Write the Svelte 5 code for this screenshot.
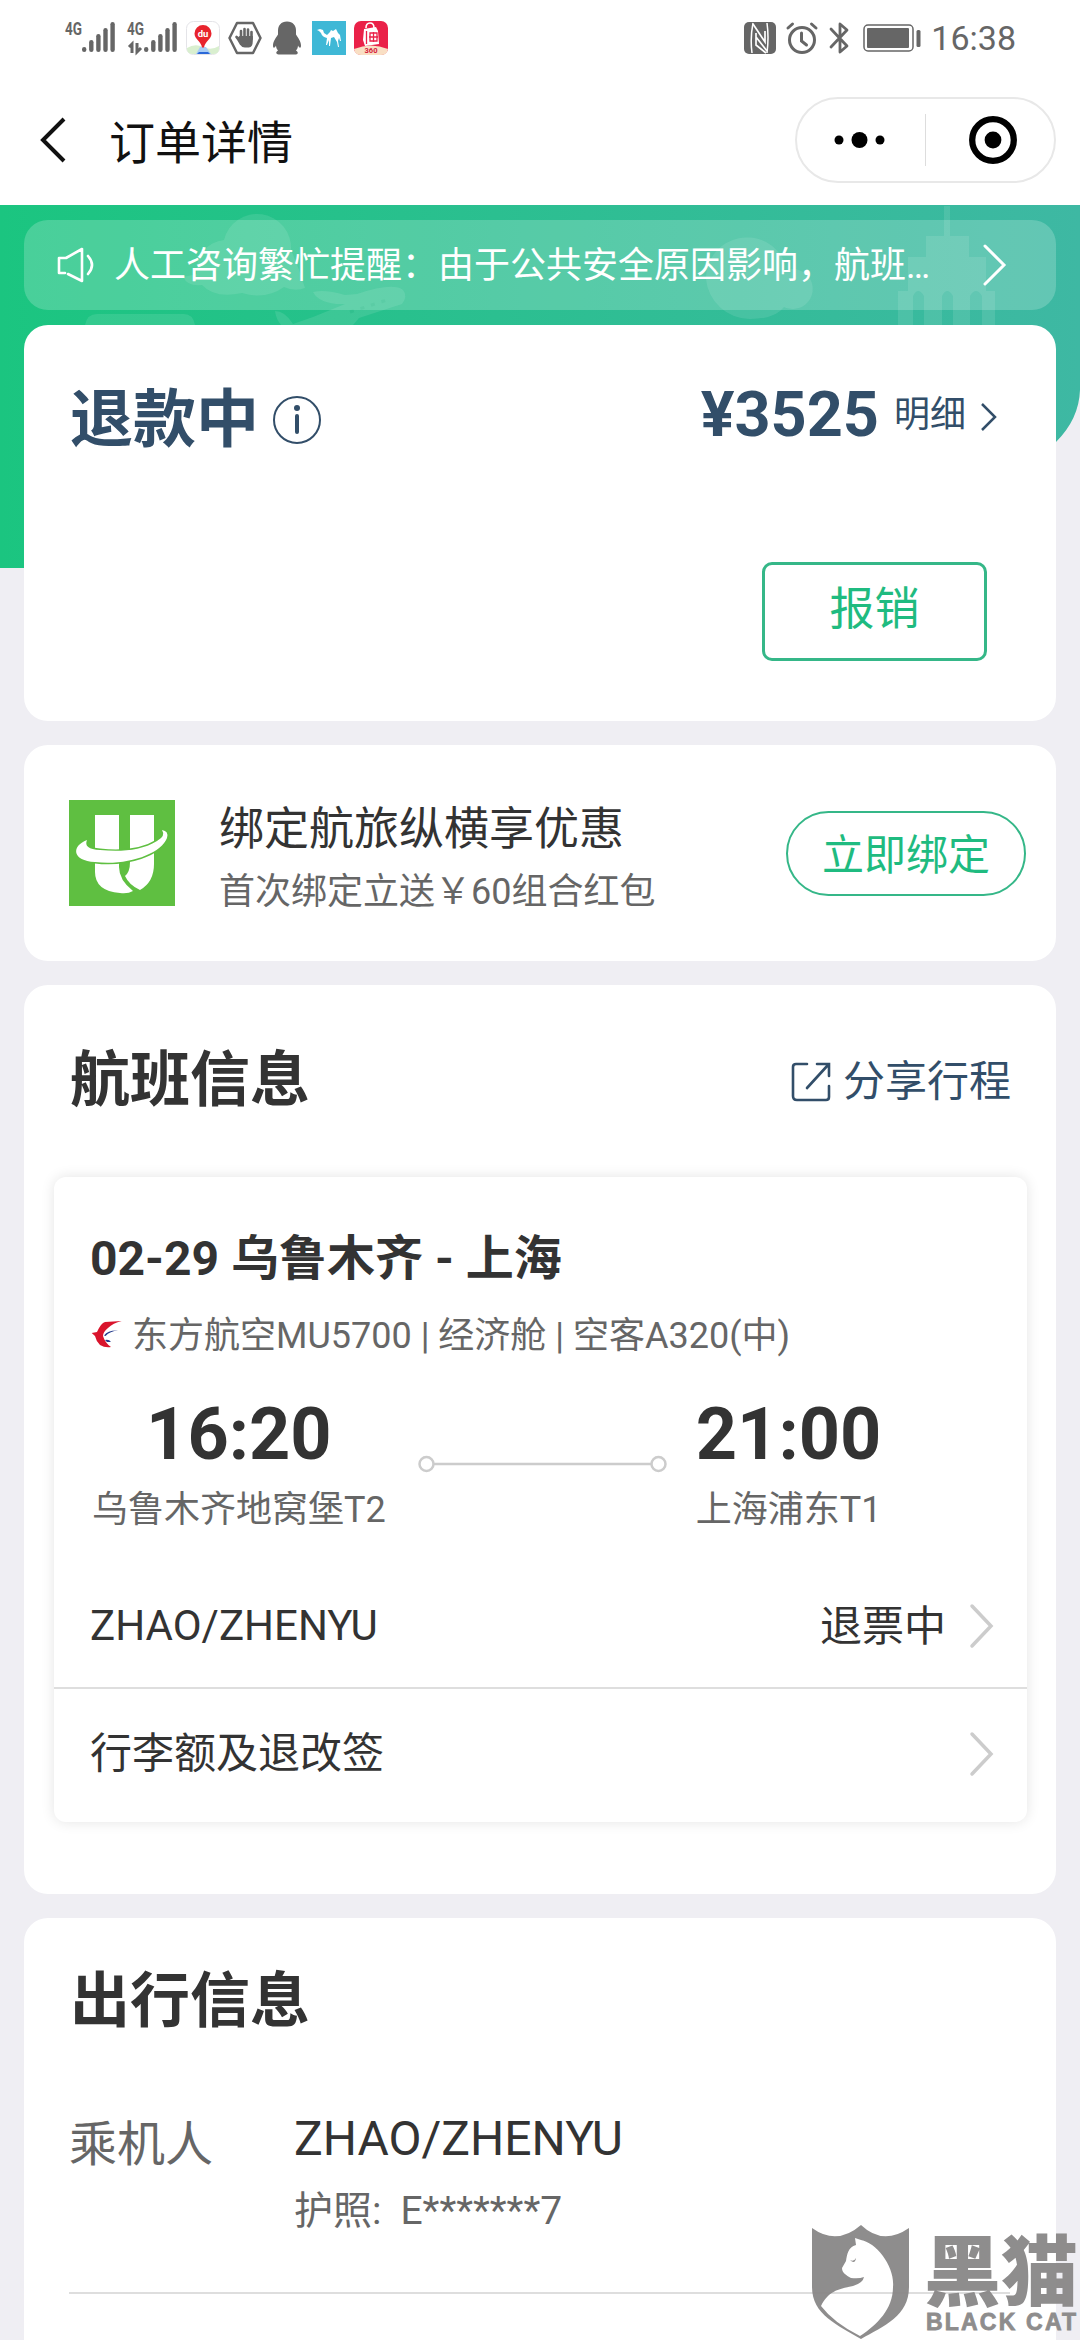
<script>
	const notice = "人工咨询繁忙提醒：由于公共安全原因影响，航班…";

	const flight = {
		date: "02-29",
		from: "乌鲁木齐",
		to: "上海",
		detail: "东方航空MU5700 | 经济舱 | 空客A320(中)",
		depart: { time: "16:20", place: "乌鲁木齐地窝堡T2" },
		arrive: { time: "21:00", place: "上海浦东T1" }
	};

	let rows = $state([
		{ label: "ZHAO/ZHENYU", status: "退票中" },
		{ label: "行李额及退改签", status: "" }
	]);

	// signal bar heights
	const bars = [5, 12, 18, 24, 30];
</script>

{#snippet signal(second)}
	<svg class="signal" class:second width="50" height="34" viewBox="0 0 50 34">
		<text x="0" y="14" font-size="18.5" font-weight="700" textLength="17" lengthAdjust="spacingAndGlyphs">4G</text>
		{#if second}
			<path d="M5 32V23L2 26M5 23v8M10 22v9l4-4" stroke="#666" stroke-width="3" fill="none" />
		{/if}
		{#each bars as h, i}
			<rect x={17 + i * 7.1} y={31 - h} width="4.4" height={h} rx="2.2" />
		{/each}
	</svg>
{/snippet}

{#snippet place(stop)}
	<div class="stop">
		<div class="time">{stop.time}</div>
		<div class="place">{stop.place}</div>
	</div>
{/snippet}

<div class="page">
	<header>
		<div class="status-bar">
			<div class="status-left">
				{@render signal(false)}
				{@render signal(true)}
				<svg class="map" width="34" height="34" viewBox="0 0 34 34">
					<rect x=".5" y=".5" width="33" height="33" rx="7" fill="#fff" stroke="#e4e4e8" />
					<path d="M1 27q8-5 16-1t16-1v3q0 5-6 5H7q-6 0-6-5z" fill="#d9efcf" />
					<path d="M14 26h6l5 7H10z" fill="#a9cdf5" />
					<path d="M13 31h9l2 2H11z" fill="#2a68d8" />
					<path d="M17 4a8.5 8.5 0 0 1 8.5 8.5c0 6-6.500 7.500-7.500 14h-2c-1-6.500-7.500-8-7.500-14A8.500 8.500 0 0 1 17 4z" fill="#e8232d" />
					<text x="17" y="15.500" font-size="9.500" font-weight="700" text-anchor="middle" fill="#fff">du</text>
				</svg>
				<svg class="hand" width="34" height="34" viewBox="0 0 34 34">
					<path d="M9 2h16l7.500 15L25 32H9L1.500 17z" fill="none" stroke="#666" stroke-width="2.500" stroke-linejoin="round" />
					<path d="M13 18v-8M16.500 17V8M20 17V8.500M23.500 18v-7M8.500 16l5 5" stroke="#666" stroke-width="2.600" stroke-linecap="round" />
					<path d="M11.700 15h13.100v5q0 6-4 6.500h-4q-3 0-5-3l-3.500-6z" fill="#666" />
				</svg>
				<svg class="penguin" width="30" height="34" viewBox="0 0 30 34">
					<path d="M15 0.500c6 0 9 4 9 9v4c2 3 5 7 5 11 0 3-1.500 3-3 0 0 2-1 4-2 5 3 2 2 4-1 4H8c-4 0-5-2-2-4-1-1-2-3-2-5-1.500 3-3 3-3 0 0-4 3-8 5-11v-4c0-5 3-9 9-9z" fill="#666" />
				</svg>
				<svg class="camel" width="34" height="34" viewBox="0 0 34 34">
					<rect width="34" height="34" fill="#3fb8d6" />
					<path d="M5 9l3-1 3 1 1 3 3 2 3-3 1-2 2 1 3-2 2 4 2 2 1 6h-1l-1-3-1 3 1 6h-1l-1-5-3-5-3 1-1 8h-1l0-6-2 5h-1l1-7q-5-1-6-5l-2-2z" fill="#fff" />
				</svg>
				<svg class="shop" width="34" height="34" viewBox="0 0 34 34">
					<rect width="34" height="34" rx="7" fill="#ea2148" />
					<path d="M0 28q17-7 34 0-1 6-7 6H7q-6 0-7-6z" fill="#f9dfc4" />
					<path d="M12 7q0-5 4-5t4 5" fill="none" stroke="#fff" stroke-width="1.600" />
					<path d="M10 8l12-2 2 4 1 13-14 2-2-6z" fill="#fff" />
					<path d="M16 12h7v8h-7zM19.500 11v10M15 16h9M12.500 10v13" fill="none" stroke="#ea2148" stroke-width="1.300" />
					<text x="17" y="32" font-size="7.500" font-weight="700" text-anchor="middle" fill="#d4203c">360</text>
				</svg>
			</div>
			<div class="status-right">
				<svg class="nfc" width="32" height="32" viewBox="0 0 32 32">
					<rect width="32" height="32" rx="5" fill="#666" />
					<path d="M9 1Q6 16 8 31M23 1q2 14 0 30" fill="none" stroke="#fff" stroke-width="1.500" />
					<path d="M9 2l12 18V9M12 11v12l10 8M12 15l11 14" fill="none" stroke="#fff" stroke-width="1.700" />
				</svg>
				<svg class="alarm" width="32" height="32" viewBox="0 0 32 32" fill="none" stroke="#666" stroke-width="3" stroke-linecap="round">
					<circle cx="16" cy="18" r="12.500" />
					<path d="M15.500 11v8l5 4M2 6l4.500-4M30 6l-4.500-4" />
				</svg>
				<svg class="bluetooth" width="20" height="32" viewBox="0 0 20 32" fill="none" stroke="#666" stroke-width="2.800" stroke-linejoin="round" stroke-linecap="round">
					<path d="M2 7l16 17-7 6V2l7 6L2 25" />
				</svg>
				<svg class="battery" width="58" height="28" viewBox="0 0 58 28">
					<rect x="1" y="1" width="49" height="26" rx="4" fill="none" stroke="#666" stroke-width="1.500" />
					<rect x="4" y="4" width="42" height="20" rx="1" fill="#666" />
					<rect x="53.500" y="6" width="4" height="17" rx="1.500" fill="#666" />
				</svg>
				<span class="clock">16:38</span>
			</div>
		</div>
		<div class="nav">
			<svg class="back" width="30" height="46" viewBox="0 0 30 46">
				<path d="M25 2L4 23l21 21" fill="none" stroke="#111" stroke-width="4" />
			</svg>
			<h1>订单详情</h1>
			<div class="capsule">
				<svg class="dots" width="52" height="18" viewBox="0 0 52 18">
					<circle cx="5" cy="9" r="4.500" />
					<circle cx="25.500" cy="9" r="8" />
					<circle cx="46" cy="9" r="4.500" />
				</svg>
				<i></i>
				<svg class="target" width="48" height="48" viewBox="0 0 48 48">
					<circle cx="24" cy="24" r="20.800" fill="none" stroke="#000" stroke-width="6.300" />
					<circle cx="24" cy="24" r="8.400" />
				</svg>
			</div>
		</div>
	</header>

	<main>
		<svg class="backdrop" width="1080" height="363" viewBox="0 0 1080 363">
			<defs>
				<linearGradient id="green" x1="0" x2="1">
					<stop offset="0" stop-color="#1bc580" />
					<stop offset="1" stop-color="#3eb8a3" />
				</linearGradient>
			</defs>
			<path d="M0 0H1080V185Q1079 214 1056 237Q1040 250 1000 255V363H0z" fill="url(#green)" />
			<g fill="#fff" fill-opacity=".1">
				<path d="M197 69A30 30 0 0 1 224 35A34 34 0 0 1 291 45Q299 63 305 83Q295 87 284 82Q266 95 242 88Q215 94 202 80Q188 82 183 72z" />
				<path d="M275 106q10 0 18 13l20-7 32-13q-25 1-32-12 12-3 32 3l12-1q36-12 46-4 5 6-1 14l-43 14-6 7h-72q-5-6-6-14z" />
				<path d="M85 120q2-11 12-11h87q9 0 11 11z" />
				<path d="M706 74a41 41 0 0 1 79-16q0 6-1 8a20 20 0 1 1 0 36q-9 12-34 12a44 44 0 0 1-44-40z" />
				<path d="M944 1h6v30h19v21h17v34h9v34h-13V91q-6-10-12 0v29h-17V91q-6-10-11 0v29h-18V91q-6-10-11 0v29h-15V86h10V52h18V31h18z" />
			</g>
			<path d="M350 107l40-13" stroke="#1fb580" stroke-opacity=".35" stroke-width="3" stroke-dasharray="4 7" />
		</svg>

		<div class="notice">
			<svg class="horn" width="38" height="36" viewBox="0 0 38 36" fill="none" stroke="#fff" stroke-width="2.600" stroke-linejoin="round" stroke-linecap="round">
				<path d="M8 26H2V11h7l16-9v32l-14-7M31 9q8 9 0 18" />
			</svg>
			<span>{notice}</span>
			<svg class="more" width="24" height="42" viewBox="0 0 24 42">
				<path d="M2 2l19 19L2 40" fill="none" stroke="#fff" stroke-width="3" stroke-linecap="round" />
			</svg>
		</div>

		<section class="card refund">
			<div class="refund-top">
				<h2>退款中</h2>
				<svg class="info" width="50" height="50" viewBox="0 0 50 50">
					<circle cx="25" cy="25" r="23" fill="none" stroke="#324e69" stroke-width="2" />
					<circle cx="25" cy="13" r="3" fill="#324e69" />
					<path d="M25 21v16" stroke="#324e69" stroke-width="4" stroke-linecap="round" />
				</svg>
				<strong>¥3525</strong>
				<span>明细</span>
				<svg class="small-arrow" width="18" height="30" viewBox="0 0 18 30">
					<path d="M2 2l13 13L2 28" fill="none" stroke="#324e69" stroke-width="2.500" />
				</svg>
			</div>
			<button class="claim">报销</button>
		</section>

		<section class="card bind">
			<svg class="logo" width="106" height="106" viewBox="0 0 106 106">
				<rect width="106" height="106" fill="#5fbf41" />
				<path d="M26 15H50V67Q50 80 64 91Q59 94 51 93Q26 91 26 72z" fill="#fff" />
				<path d="M61 15H85V64Q85 82 71 90Q60 85 56 76Q61 72 61 62z" fill="#fff" />
				<path d="M18 40C2 46 3 61 26 62C58 66 92 54 98 38Q100 31 93 30Q97 36 88 41C72 51 50 52 31 50Q14 49 18 40z" fill="#fff" stroke="#5fbf41" stroke-width="3" paint-order="stroke" />
			</svg>
			<div class="bind-text">
				<p>绑定航旅纵横享优惠</p>
				<small>首次绑定立送￥60组合红包</small>
			</div>
			<button class="bind-now">立即绑定</button>
		</section>

		<section class="card flights">
			<div class="card-head">
				<h3>航班信息</h3>
				<svg class="share" width="42" height="42" viewBox="0 0 42 42" fill="none" stroke="#324e69" stroke-width="2.600" stroke-linecap="round">
					<path d="M17 3H6Q3 3 3 6v29q0 4 4 4h29q3 0 3-3V25M27 3h12v12M38 4L17 27" />
				</svg>
				<span>分享行程</span>
			</div>
			<div class="flight">
				<h4>{flight.date} {flight.from} - {flight.to}</h4>
				<div class="detail">
					<svg width="32" height="28" viewBox="0 0 32 28">
						<path d="M.7 13L6 12Q10 3 14 2L30.700 1Q22 3 17 8Q12 12 12 16Q14 23 20 27Q14 28 9 25Q5 21 4 16z" fill="#d9142c" />
						<path d="M13 15.500q4-5.500 14-5-8 .5-12.500 5.500zM14 20q4-1 6 2l-4 0z" fill="#253b8c" />
					</svg>
					<span>{flight.detail}</span>
				</div>
				<div class="route">
					{@render place(flight.depart)}
					<svg class="line" width="252" height="18" viewBox="0 0 252 18" fill="none" stroke="#ccc">
						<path d="M17 9h218" stroke-width="2.500" />
						<circle cx="9.500" cy="9" r="7" stroke-width="2.500" />
						<circle cx="241.500" cy="9" r="7" stroke-width="2.500" />
					</svg>
					{@render place(flight.arrive)}
				</div>
				{#each rows as row}
					<div class="row">
						<span>{row.label}</span>
						<span class="state">{row.status}</span>
						<svg width="24" height="44" viewBox="0 0 24 44">
							<path d="M2 2l19 20L2 42" fill="none" stroke="#ccc" stroke-width="3.500" stroke-linecap="round" />
						</svg>
					</div>
				{/each}
			</div>
		</section>

		<section class="card travel">
			<h3>出行信息</h3>
			<div class="person">
				<span class="label">乘机人</span>
				<div>
					<div class="name">ZHAO/ZHENYU</div>
					<div class="passport"><span>护照:</span>E*******7</div>
				</div>
			</div>
		</section>
	</main>

	<div class="watermark">
		<svg width="100" height="116" viewBox="0 0 100 116">
			<path fill-rule="evenodd" d="M1 3Q26 21 50 0Q72 21 98 3V62C98 91 73 101 50 114C27 100 1 90 1 62zM47 14L44 13L45 20C37 22 36 30 35 36L31 43C31 48 35 50 40 53Q48 54 53 52Q52 58 42 61C26 64 17 67 10 81Q23 98 49 111C66 100 82 84 82 62C84 42 66 18 50 15z" />
			<path d="M39 35q4 2 6-2-1 7-6 2z" />
		</svg>
		<div class="brand">
			<div class="brand-cn">黑猫</div>
			<div class="brand-en">BLACK CAT</div>
		</div>
	</div>
</div>

<style>
	:global(body) {
		margin: 0;
		background: #efeff4;
	}
	.page {
		position: relative;
		width: 1080px;
		height: 2340px;
		overflow: hidden;
		background: #efeef3;
		color: #333;
		font-family: Roboto, "Noto Sans CJK SC", sans-serif;
	}
	h1,
	h2,
	h3,
	h4,
	p {
		margin: 0;
	}
	svg {
		display: block;
		flex: none;
		overflow: visible;
	}
	button {
		box-sizing: border-box;
		padding: 0;
		background: #fff;
		color: #1fbb80;
		font-family: inherit;
	}

	header {
		height: 205px;
		background: #fff;
	}
	.status-bar {
		display: flex;
		justify-content: space-between;
		height: 75px;
		padding: 0 64px 0 65px;
	}
	.status-left,
	.status-right {
		display: flex;
		align-items: center;
	}
	.signal {
		fill: #666;
	}
	.second {
		margin-left: 12px;
	}
	.map {
		margin-left: 9px;
	}
	.hand {
		margin-left: 8px;
	}
	.penguin {
		margin-left: 10px;
	}
	.camel {
		margin-left: 10px;
	}
	.shop {
		margin-left: 8px;
	}
	.alarm {
		margin-left: 10px;
	}
	.bluetooth {
		margin-left: 11px;
	}
	.battery {
		margin-left: 14px;
	}
	.clock {
		margin-left: 10px;
		color: #666;
		font-size: 34px;
		line-height: 40px;
	}
	.nav {
		display: flex;
		align-items: center;
		height: 130px;
		padding: 0 24px 0 39px;
		box-sizing: border-box;
	}
	h1 {
		margin: 5px 0 0 40px;
		color: #111;
		font-size: 46px;
		font-weight: 400;
		line-height: 60px;
	}
	.capsule {
		display: flex;
		align-items: center;
		box-sizing: border-box;
		width: 261px;
		height: 86px;
		margin-left: auto;
		border: 2px solid #e8e8e8;
		border-radius: 43px;
	}
	.dots {
		margin-left: 37px;
	}
	.capsule i {
		width: 1px;
		height: 52px;
		margin-left: 39px;
		background: #ddd;
	}
	.target {
		margin-left: 43px;
	}

	main {
		position: relative;
		display: flex;
		flex-direction: column;
		gap: 24px;
		padding: 15px 24px 0;
	}
	.backdrop {
		position: absolute;
		top: 0;
		left: 0;
	}
	.notice {
		position: relative;
		display: flex;
		align-items: center;
		height: 90px;
		margin-bottom: -9px;
		border-radius: 24px;
		background: rgba(255, 255, 255, 0.2);
		color: #fff;
		font-size: 36px;
		line-height: 50px;
	}
	.horn {
		margin-left: 33px;
	}
	.notice span {
		margin: 2px 0 0 19px;
		white-space: nowrap;
	}
	.more {
		margin-left: auto;
		margin-right: 49px;
	}

	.card {
		position: relative;
		box-sizing: border-box;
		border-radius: 24px;
		background: #fff;
	}
	.refund {
		height: 396px;
	}
	.refund-top {
		display: flex;
		align-items: center;
		height: 180px;
		padding: 0 58px 0 46px;
		color: #324e69;
	}
	h2 {
		font-size: 63px;
		line-height: 80px;
		margin-top: 9px;
	}
	.info {
		margin: 10px 0 0 13px;
	}
	.refund-top strong {
		margin-left: auto;
		font-size: 63px;
		line-height: 80px;
	}
	.refund-top span {
		margin-left: 15px;
		font-size: 36px;
		line-height: 50px;
	}
	.small-arrow {
		margin-left: 14px;
		margin-top: 3px;
	}
	.claim {
		display: block;
		width: 225px;
		height: 99px;
		margin: 57px 0 0 738px;
		padding-bottom: 4px;
		border: 3px solid #35b788;
		border-radius: 10px;
		font-size: 45px;
		line-height: 60px;
	}

	.bind {
		display: flex;
		align-items: center;
		height: 216px;
		padding: 0 30px 0 45px;
	}
	.bind-text {
		margin-left: 44px;
	}
	.bind-text p {
		font-size: 45px;
		line-height: 64px;
		margin-top: 13px;
	}
	.bind-text small {
		display: block;
		color: #666;
		font-size: 36px;
		line-height: 60px;
	}
	.bind-now {
		width: 240px;
		height: 85px;
		margin-left: auto;
		padding-top: 5px;
		border: 2px solid #35b788;
		border-radius: 43px;
		font-size: 42px;
		line-height: 60px;
	}

	.flights {
		height: 909px;
		padding: 0 29px 0 30px;
	}
	.card-head {
		display: flex;
		align-items: center;
		height: 192px;
		padding: 0 16px;
	}
	h3 {
		font-size: 60px;
		line-height: 80px;
	}
	.share {
		margin-left: auto;
		margin-top: 1px;
	}
	.card-head span {
		margin: 2px 0 0 11px;
		color: #324e69;
		font-size: 42px;
		line-height: 60px;
	}
	.flight {
		box-sizing: border-box;
		height: 645px;
		padding-top: 52px;
		border-radius: 12px;
		box-shadow: 0 0 14px rgba(0, 0, 0, 0.11);
	}
	h4 {
		padding-left: 36px;
		font-size: 48px;
		line-height: 60px;
	}
	.detail {
		display: flex;
		align-items: center;
		gap: 9px;
		height: 50px;
		margin-top: 20px;
		padding-left: 37px;
		color: #666;
		font-size: 36px;
		line-height: 50px;
	}
	.detail span {
		margin-top: 3px;
	}
	.route {
		display: flex;
		align-items: center;
		margin-top: 36px;
		padding-left: 38px;
	}
	.stop {
		text-align: center;
	}
	.time {
		font-size: 72px;
		font-weight: 700;
		line-height: 80px;
	}
	.place {
		margin-top: 10px;
		color: #666;
		font-size: 36px;
		line-height: 50px;
	}
	.line {
		margin: 0 27px 3px 31px;
	}
	.row {
		display: flex;
		align-items: center;
		box-sizing: border-box;
		height: 126px;
		padding: 3px 33px 0 36px;
		font-size: 42px;
		line-height: 60px;
	}
	.route + .row {
		height: 127px;
		margin-top: 27px;
		padding-top: 2px;
		border-bottom: 2px solid #dedede;
	}
	.state {
		margin: 3px 24px 0 auto;
	}

	.travel {
		height: 500px;
		padding: 44px 46px 0 45px;
	}
	.travel h3 {
		padding-left: 1px;
	}
	.person {
		display: flex;
		box-sizing: border-box;
		height: 252px;
		padding-top: 65px;
		border-bottom: 2px solid #dedede;
	}
	.label {
		width: 225px;
		color: #666;
		font-size: 48px;
		line-height: 64px;
		padding-top: 6px;
	}
	.name {
		font-size: 48px;
		line-height: 64px;
	}
	.passport {
		margin-top: 15px;
		color: #666;
		font-size: 39px;
		line-height: 50px;
	}
	.passport span {
		margin-right: 19px;
	}

	.watermark {
		position: absolute;
		left: 811px;
		top: 2225px;
		display: flex;
		width: 269px;
		height: 115px;
		color: #898787;
		fill: #898787;
		opacity: 0.95;
	}
	.brand {
		margin: 2px 0 0 13px;
		white-space: nowrap;
	}
	.brand-cn {
		height: 80px;
		font-family: "Noto Sans CJK SC", sans-serif;
		font-size: 77px;
		font-weight: 900;
		line-height: 80px;
	}
	.brand-en {
		margin: 2px 0 0 2px;
		font-family: "Liberation Sans", sans-serif;
		font-size: 23px;
		font-weight: 700;
		line-height: 26px;
		letter-spacing: 2.2px;
		-webkit-text-stroke: 0.8px #898787;
	}
</style>
